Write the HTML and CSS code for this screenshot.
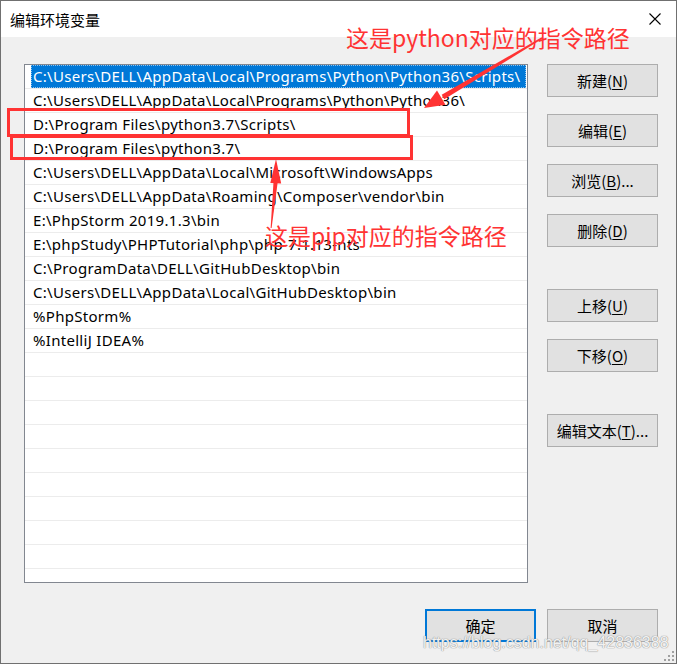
FILE: index.html
```html
<!DOCTYPE html>
<html lang="zh-CN">
<head>
    <meta charset="UTF-8">
    <title>编辑环境变量</title>
    <link rel="stylesheet" href="styles.css">
</head>
<body>

<div class="window">
    <div class="titlebar">
        <span class="title">编辑环境变量</span>
        <svg class="close" width="12" height="12" viewBox="0 0 12 12">
            <path d="M0.5 0.5 L11.5 11.5 M11.5 0.5 L0.5 11.5" stroke="#000" stroke-width="1.1" fill="none"/>
        </svg>
    </div>

    <div class="content">
        <div class="main">
            <div class="list">
                <div class="row selected"><span class="item">C:\Users\DELL\AppData\Local\Programs\Python\Python36\Scripts\</span></div>
                <div class="row"><span class="item">C:\Users\DELL\AppData\Local\Programs\Python\Python36\</span></div>
                <div class="row"><span class="item">D:\Program Files\python3.7\Scripts\</span></div>
                <div class="row"><span class="item">D:\Program Files\python3.7\</span></div>
                <div class="row"><span class="item">C:\Users\DELL\AppData\Local\Microsoft\WindowsApps</span></div>
                <div class="row"><span class="item">C:\Users\DELL\AppData\Roaming\Composer\vendor\bin</span></div>
                <div class="row"><span class="item">E:\PhpStorm 2019.1.3\bin</span></div>
                <div class="row"><span class="item">E:\phpStudy\PHPTutorial\php\php-7.1.13-nts</span></div>
                <div class="row"><span class="item">C:\ProgramData\DELL\GitHubDesktop\bin</span></div>
                <div class="row"><span class="item">C:\Users\DELL\AppData\Local\GitHubDesktop\bin</span></div>
                <div class="row"><span class="item">%PhpStorm%</span></div>
                <div class="row"><span class="item">%IntelliJ IDEA%</span></div>
                <div class="row"></div>
                <div class="row"></div>
                <div class="row"></div>
                <div class="row"></div>
                <div class="row"></div>
                <div class="row"></div>
                <div class="row"></div>
                <div class="row"></div>
                <div class="row"></div>
                <div class="row"></div>
            </div>

            <div class="side">
                <div class="group">
                    <button class="btn">新建(<u>N</u>)</button>
                    <button class="btn">编辑(<u>E</u>)</button>
                    <button class="btn">浏览(<u>B</u>)...</button>
                    <button class="btn">删除(<u>D</u>)</button>
                </div>
                <div class="group">
                    <button class="btn">上移(<u>U</u>)</button>
                    <button class="btn">下移(<u>O</u>)</button>
                </div>
                <div class="group">
                    <button class="btn">编辑文本(<u>T</u>)...</button>
                </div>
            </div>
        </div>

        <div class="footer">
            <button class="btn default">确定</button>
            <button class="btn">取消</button>
        </div>
    </div>

    <!-- annotations drawn over the dialog -->
    <div class="note note-python">这是python对应的指令路径</div>
    <div class="note note-pip">这是pip对应的指令路径</div>
    <div class="mark mark-scripts"></div>
    <div class="mark mark-root"></div>
    <svg class="arrows" width="677" height="664" viewBox="0 0 677 664">
        <polygon fill="#f33" points="542.4,38.7 541.6,37.3 441.7,94.8 444.3,99.2"/>
        <polygon fill="#f33" points="424,108 437,90.5 445.5,104.8"/>
        <polygon fill="#f33" points="276,159 270.3,183 281.2,183.4"/>
        <polygon fill="#f33" points="273.5,182 277.7,182.2 271.6,228 270.6,228"/>
    </svg>

    <div class="watermark">https://blog.csdn.net/qq_42836388</div>
    <svg class="grip" width="12" height="12" viewBox="0 0 12 12">
        <rect x="9" y="1" width="2" height="2" fill="#a0a0a0"/>
        <rect x="5" y="5" width="2" height="2" fill="#a0a0a0"/>
        <rect x="9" y="5" width="2" height="2" fill="#a0a0a0"/>
        <rect x="1" y="9" width="2" height="2" fill="#a0a0a0"/>
        <rect x="5" y="9" width="2" height="2" fill="#a0a0a0"/>
        <rect x="9" y="9" width="2" height="2" fill="#a0a0a0"/>
    </svg>
</div>

</body>
</html>
```

FILE: styles.css
```css
body {
    margin: 0;
    font-family: 'Noto Sans', 'Noto Sans CJK SC', sans-serif;
    background: #f0f0f0;
}
.window {
    position: relative;
    width: 677px;
    height: 664px;
    box-sizing: border-box;
    border: 1px solid #707070;
    background: #f0f0f0;
    overflow: hidden;
}
.titlebar {
    height: 36px;
    background: white;
    display: flex;
    align-items: center;
    justify-content: space-between;
    padding: 0 15px 0 9px;
}
.title {
    font-family: 'Noto Sans CJK SC', sans-serif;
    font-size: 15px;
    color: #000;
}
.content {
    padding: 27px 18px 21px 23px;
    display: flex;
    flex-direction: column;
    gap: 26px;
}
.main {
    display: flex;
    gap: 19px;
    height: 519px;
}
.list {
    width: 504px;
    box-sizing: border-box;
    border: 1px solid #828790;
    background: white;
    overflow: hidden;
}
.row {
    height: 24px;
    box-sizing: border-box;
    border-bottom: 1px solid #ececec;
    padding: 0 1px 0 6px;
    display: flex;
}
.item {
    flex: 1;
    padding-left: 2px;
    font-size: 15px;
    letter-spacing: 0.3px;
    line-height: 23px;
    color: #000;
    white-space: nowrap;
    overflow: hidden;
}
.selected .item {
    background: #0078d7;
    color: white;
    outline: 1px dotted rgba(255, 255, 255, 0.55);
    outline-offset: -1px;
}
.side {
    display: flex;
    flex-direction: column;
    gap: 42px;
}
.group {
    display: flex;
    flex-direction: column;
    gap: 17px;
}
.btn {
    width: 111px;
    height: 33px;
    box-sizing: border-box;
    border: 1px solid #adadad;
    background: #e1e1e1;
    font-family: 'Noto Sans CJK SC', sans-serif;
    font-size: 15px;
    color: #000;
    padding: 0;
}
.btn u {
    text-underline-offset: 2px;
}
.btn.default {
    border: 2px solid #0078d7;
}
.footer {
    display: flex;
    justify-content: flex-end;
    gap: 11px;
}
.note {
    position: absolute;
    font-family: 'Noto Sans CJK SC', sans-serif;
    font-size: 23px;
    line-height: 25px;
    color: #f33;
    white-space: nowrap;
}
.note-python {
    left: 345px;
    top: 24px;
}
.note-pip {
    left: 264px;
    top: 222px;
}
.mark {
    position: absolute;
    border: 3px solid #f33;
    box-sizing: border-box;
}
.mark-scripts {
    left: 6px;
    top: 107px;
    width: 403px;
    height: 29px;
}
.mark-root {
    left: 9px;
    top: 134px;
    width: 403px;
    height: 25px;
}
.arrows {
    position: absolute;
    left: -1px;
    top: -1px;
}
.watermark {
    position: absolute;
    left: 422px;
    top: 633px;
    font-family: 'Liberation Sans', sans-serif;
    font-size: 16px;
    color: rgba(255, 255, 255, 0.9);
    text-shadow: 0 0 1px #909090, 0 0 1px #909090;
    white-space: nowrap;
}
.grip {
    position: absolute;
    right: 1px;
    bottom: 1px;
}
```
